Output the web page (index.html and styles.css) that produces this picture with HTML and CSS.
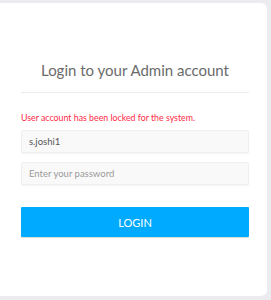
FILE: index.html
```html
<!DOCTYPE html>
<html lang="en">
<head>
    <meta charset="UTF-8">
    <meta name="viewport" content="width=device-width, initial-scale=1.0">
    <title>Admin Login</title>
    <link rel="stylesheet" href="styles.css">
</head>
<body>

<div class="page">
    <div class="card">
        <h1 class="title">Login to your Admin account</h1>
        <div class="divider"></div>

        <div class="error">User account has been locked for the system.</div>

        <form class="login-form">
            <input type="text" class="field" value="s.joshi1">
            <input type="password" class="field" placeholder="Enter your password">
            <button type="submit" class="button">LOGIN</button>
        </form>
    </div>
</div>

</body>
</html>
```

FILE: styles.css
```css
body {
    margin: 0;
    padding: 0;
    background-color: #ececf0;
    font-family: Lato, "Open Sans", sans-serif;
}

.page {
    padding: 3px 4px 4px 0;
}

.card {
    height: 293px;
    box-sizing: border-box;
    background-color: white;
    border-radius: 0 6px 6px 0;
    padding: 55px 18px 0 21px;
}

.title {
    margin: 0;
    text-align: center;
    font-size: 15px;
    font-weight: normal;
    color: #6b6b6b;
    line-height: 24px;
}

.divider {
    height: 1px;
    margin-top: 10px;
    background-color: #ececec;
}

.error {
    margin-top: 18px;
    font-size: 8.8px;
    line-height: 14px;
    color: #ff2a45;
}

.login-form {
    display: flex;
    flex-direction: column;
    margin-top: 5px;
}

.field {
    height: 23px;
    margin-bottom: 9px;
    padding: 0 7px;
    border: 1px solid #efefef;
    border-radius: 2px;
    background-color: #f9f9f9;
    box-shadow: 0 1px 1px rgba(0, 0, 0, 0.05);
    font-family: inherit;
    font-size: 9.5px;
    color: #555;
    box-sizing: border-box;
}

.field::placeholder {
    color: #9a9a9a;
}

.button {
    height: 30px;
    margin-top: 13px;
    border: none;
    border-radius: 1px;
    background-color: #00aaff;
    color: white;
    font-family: inherit;
    font-size: 11px;
    box-shadow: 0 1px 1px rgba(0, 0, 0, 0.15);
    cursor: pointer;
}
```
